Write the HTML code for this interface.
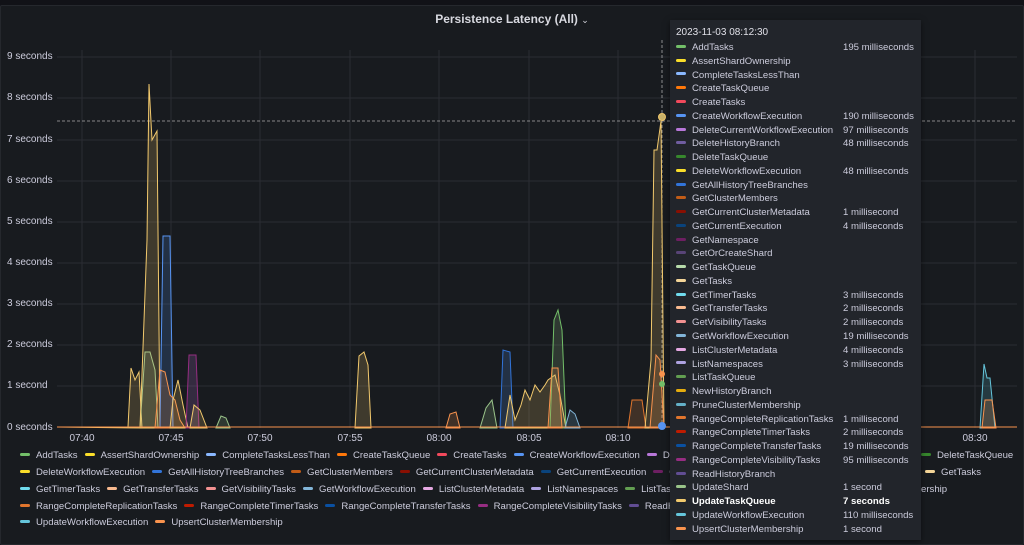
<!DOCTYPE html>
<html><head><meta charset="utf-8"><style>
*{margin:0;padding:0;box-sizing:border-box}
body{width:1024px;height:537px;background:#111217;font-family:"Liberation Sans",sans-serif;color:#ccccdc;overflow:hidden;position:relative}
.panel{position:absolute;left:0;top:5px;width:1024px;height:540px;background:#181b1f;border:1px solid #25282d;border-radius:2px}
.title{position:absolute;top:12px;left:0;width:1024px;text-align:center;font-size:12px;font-weight:bold;color:#d8d9e0}
.yl{position:absolute;left:7px;font-size:10px;color:#ccccdc}
.xl{position:absolute;top:433px;font-size:10px;color:#ccccdc;transform:translateX(-50%)}
.leg{position:absolute;left:20px;font-size:9.6px;white-space:nowrap;color:#ccccdc}
.leg span{margin-right:7px}
.leg i,.tt i{display:inline-block;width:10px;height:3px;border-radius:2px;vertical-align:middle;margin-right:6px;position:relative;top:-1px}
.tt{position:absolute;left:670px;top:20px;width:251px;height:520px;background:#22252b;font-size:9.6px;color:#ccccdc;box-shadow:0 2px 6px rgba(0,0,0,.5)}
.tt .d{position:absolute;left:6px;top:7px;font-size:10px;color:#e0e0e8}
.row{position:absolute;left:6px;height:13px;white-space:nowrap;width:245px}
.row .v{position:absolute;left:167px}
.b{font-weight:bold;color:#fff}
</style></head><body>
<div class="panel"></div>
<div class="title">Persistence Latency (All) <span style="font-weight:normal;font-size:9px">&#8964;</span></div>
<svg style="position:absolute;left:0;top:0" width="1024" height="537">
<g stroke="#2a2d33" stroke-width="1">
<line x1="57" y1="57" x2="1017" y2="57"/><line x1="57" y1="98" x2="1017" y2="98"/><line x1="57" y1="140" x2="1017" y2="140"/><line x1="57" y1="181" x2="1017" y2="181"/><line x1="57" y1="222" x2="1017" y2="222"/><line x1="57" y1="263" x2="1017" y2="263"/><line x1="57" y1="304" x2="1017" y2="304"/><line x1="57" y1="345" x2="1017" y2="345"/><line x1="57" y1="386" x2="1017" y2="386"/>
<line x1="82" y1="50" x2="82" y2="428"/><line x1="171" y1="50" x2="171" y2="428"/><line x1="260" y1="50" x2="260" y2="428"/><line x1="350" y1="50" x2="350" y2="428"/><line x1="439" y1="50" x2="439" y2="428"/><line x1="529" y1="50" x2="529" y2="428"/><line x1="618" y1="50" x2="618" y2="428"/><line x1="975" y1="50" x2="975" y2="428"/>
</g>
<line x1="57" y1="121" x2="1017" y2="121" stroke="#aaa" stroke-dasharray="3,2" stroke-width="0.8"/>
<line x1="662" y1="40" x2="662" y2="428" stroke="#aaa" stroke-dasharray="3,2" stroke-width="0.8"/>
<g stroke-width="1" fill-opacity="0.18">
<polygon points="57,427 128,427 131,368 135,380 139,372 142,428" fill="#f2c96d" stroke="#f2c96d"/>
<polygon points="140,428 145,352 150,352 155,370 158,428" fill="#9ac48a" stroke="#9ac48a"/>
<polygon points="140,428 147,240 149,84 152,140 157,131 160,428" fill="#f2c96d" stroke="#f2c96d"/>
<polygon points="160,428 163,236 170,236 173,428" fill="#5794f2" stroke="#5794f2"/>
<polygon points="155,428 160,370 165,372 170,395 175,400 180,420 185,428" fill="#f9934e" stroke="#f9934e"/>
<polygon points="170,428 173,400 178,380 183,405 188,428" fill="#f2c96d" stroke="#f2c96d"/>
<polygon points="186,428 189,355 196,355 199,428" fill="#b877d9" stroke="#962d82"/>
<polygon points="190,428 194,405 200,410 207,428" fill="#f2c96d" stroke="#f2c96d"/>
<polygon points="216,428 221,416 226,418 230,428" fill="#9ac48a" stroke="#9ac48a"/>
<polygon points="355,428 359,356 364,352 368,365 371,428" fill="#f2c96d" stroke="#f2c96d"/>
<polygon points="446,428 450,414 456,412 460,428" fill="#f9934e" stroke="#f9934e"/>
<polygon points="480,428 486,408 492,400 497,428" fill="#9ac48a" stroke="#9ac48a"/>
<polygon points="500,428 503,350 510,352 513,428" fill="#5794f2" stroke="#3274d9"/>
<polygon points="505,428 510,395 515,420 521,405 525,390 530,400 535,385 540,392 545,385 548,380 555,375 560,395 566,428" fill="#f2c96d" stroke="#f2c96d"/>
<polygon points="550,428 554,320 558,310 562,330 566,428" fill="#9ac48a" stroke="#73bf69"/>
<polygon points="548,428 552,368 558,368 562,428" fill="#f9934e" stroke="#f9934e"/>
<polygon points="565,428 570,410 575,414 580,428" fill="#82b5d8" stroke="#82b5d8"/>
<polygon points="628,428 632,400 642,400 646,428" fill="#f9934e" stroke="#e0752d"/>
<polygon points="645,428 651,360 654,150 657,150 661,121 664,428" fill="#f2c96d" stroke="#f2c96d"/>
<polygon points="650,428 656,355 660,360 664,428" fill="#f9934e" stroke="#f9934e"/>
<polygon points="980,428 984,364 987,378 990,378 995,428" fill="#65c5db" stroke="#65c5db"/>
<polygon points="982,428 985,400 992,400 996,428" fill="#f9934e" stroke="#f9934e"/>
<polyline points="57,427 1017,427" stroke="#f9934e" fill="none"/>
</g>
<circle cx="662" cy="117" r="3.5" fill="#c9b26a" stroke="#f2c96d"/>
<circle cx="662" cy="374" r="3" fill="#f9934e"/>
<circle cx="662" cy="384" r="3" fill="#73bf69"/>
<circle cx="662" cy="426" r="4" fill="#5794f2"/>
</svg>
<div class="yl" style="top:51px">9 seconds</div><div class="yl" style="top:92px">8 seconds</div><div class="yl" style="top:134px">7 seconds</div><div class="yl" style="top:175px">6 seconds</div><div class="yl" style="top:216px">5 seconds</div><div class="yl" style="top:257px">4 seconds</div><div class="yl" style="top:298px">3 seconds</div><div class="yl" style="top:339px">2 seconds</div><div class="yl" style="top:380px">1 second</div><div class="yl" style="top:422px">0 seconds</div>
<div class="xl" style="left:82px">07:40</div><div class="xl" style="left:171px">07:45</div><div class="xl" style="left:260px">07:50</div><div class="xl" style="left:350px">07:55</div><div class="xl" style="left:439px">08:00</div><div class="xl" style="left:529px">08:05</div><div class="xl" style="left:618px">08:10</div><div class="xl" style="left:975px">08:30</div>

<div class="leg" style="top:450px"><span><i style="background:#73bf69"></i>AddTasks</span><span><i style="background:#fade2a"></i>AssertShardOwnership</span><span><i style="background:#8ab8ff"></i>CompleteTasksLessThan</span><span><i style="background:#ff780a"></i>CreateTaskQueue</span><span><i style="background:#f2495c"></i>CreateTasks</span><span><i style="background:#5794f2"></i>CreateWorkflowExecution</span><span><i style="background:#b877d9"></i>DeleteCurrentWorkflowExecution</span><span><i style="background:#705da0"></i>DeleteHistoryBranch</span></div>
<div class="leg" style="top:450px;left:921px"><span><i style="background:#37872d"></i>DeleteTaskQueue</span></div>
<div class="leg" style="top:467px"><span><i style="background:#fade2a"></i>DeleteWorkflowExecution</span><span><i style="background:#3274d9"></i>GetAllHistoryTreeBranches</span><span><i style="background:#c15c17"></i>GetClusterMembers</span><span><i style="background:#890f02"></i>GetCurrentClusterMetadata</span><span><i style="background:#0a437c"></i>GetCurrentExecution</span><span><i style="background:#6d1f62"></i>GetNamespace</span></div>
<div class="leg" style="top:467px;left:925px"><span><i style="background:#f4d598"></i>GetTasks</span></div>
<div class="leg" style="top:484px"><span><i style="background:#70dbed"></i>GetTimerTasks</span><span><i style="background:#f9ba8f"></i>GetTransferTasks</span><span><i style="background:#f29191"></i>GetVisibilityTasks</span><span><i style="background:#82b5d8"></i>GetWorkflowExecution</span><span><i style="background:#e5a8e2"></i>ListClusterMetadata</span><span><i style="background:#aea2e0"></i>ListNamespaces</span><span><i style="background:#629e51"></i>ListTaskQueue</span></div>
<div class="leg" style="top:484px;left:921px">ership</div>
<div class="leg" style="top:501px"><span><i style="background:#e0752d"></i>RangeCompleteReplicationTasks</span><span><i style="background:#bf1b00"></i>RangeCompleteTimerTasks</span><span><i style="background:#0a50a1"></i>RangeCompleteTransferTasks</span><span><i style="background:#962d82"></i>RangeCompleteVisibilityTasks</span><span><i style="background:#614d93"></i>ReadHistoryBranch</span></div>
<div class="leg" style="top:517px"><span><i style="background:#65c5db"></i>UpdateWorkflowExecution</span><span><i style="background:#f9934e"></i>UpsertClusterMembership</span></div>

<div class="tt">
<div class="d">2023-11-03 08:12:30</div>
<div class="row" style="top:22px"><i style="background:#73bf69"></i>AddTasks<span class="v">195 milliseconds</span></div>
<div class="row" style="top:35.8px"><i style="background:#fade2a"></i>AssertShardOwnership</div>
<div class="row" style="top:49.5px"><i style="background:#8ab8ff"></i>CompleteTasksLessThan</div>
<div class="row" style="top:63.3px"><i style="background:#ff780a"></i>CreateTaskQueue</div>
<div class="row" style="top:77px"><i style="background:#f2495c"></i>CreateTasks</div>
<div class="row" style="top:90.8px"><i style="background:#5794f2"></i>CreateWorkflowExecution<span class="v">190 milliseconds</span></div>
<div class="row" style="top:104.6px"><i style="background:#b877d9"></i>DeleteCurrentWorkflowExecution<span class="v">97 milliseconds</span></div>
<div class="row" style="top:118.3px"><i style="background:#705da0"></i>DeleteHistoryBranch<span class="v">48 milliseconds</span></div>
<div class="row" style="top:132.1px"><i style="background:#37872d"></i>DeleteTaskQueue</div>
<div class="row" style="top:145.8px"><i style="background:#fade2a"></i>DeleteWorkflowExecution<span class="v">48 milliseconds</span></div>
<div class="row" style="top:159.6px"><i style="background:#3274d9"></i>GetAllHistoryTreeBranches</div>
<div class="row" style="top:173.4px"><i style="background:#c15c17"></i>GetClusterMembers</div>
<div class="row" style="top:187.1px"><i style="background:#890f02"></i>GetCurrentClusterMetadata<span class="v">1 millisecond</span></div>
<div class="row" style="top:200.9px"><i style="background:#0a437c"></i>GetCurrentExecution<span class="v">4 milliseconds</span></div>
<div class="row" style="top:214.6px"><i style="background:#6d1f62"></i>GetNamespace</div>
<div class="row" style="top:228.4px"><i style="background:#584477"></i>GetOrCreateShard</div>
<div class="row" style="top:242.2px"><i style="background:#b7dbab"></i>GetTaskQueue</div>
<div class="row" style="top:255.9px"><i style="background:#f4d598"></i>GetTasks</div>
<div class="row" style="top:269.7px"><i style="background:#70dbed"></i>GetTimerTasks<span class="v">3 milliseconds</span></div>
<div class="row" style="top:283.4px"><i style="background:#f9ba8f"></i>GetTransferTasks<span class="v">2 milliseconds</span></div>
<div class="row" style="top:297.2px"><i style="background:#f29191"></i>GetVisibilityTasks<span class="v">2 milliseconds</span></div>
<div class="row" style="top:311px"><i style="background:#82b5d8"></i>GetWorkflowExecution<span class="v">19 milliseconds</span></div>
<div class="row" style="top:324.7px"><i style="background:#e5a8e2"></i>ListClusterMetadata<span class="v">4 milliseconds</span></div>
<div class="row" style="top:338.5px"><i style="background:#aea2e0"></i>ListNamespaces<span class="v">3 milliseconds</span></div>
<div class="row" style="top:352.2px"><i style="background:#629e51"></i>ListTaskQueue</div>
<div class="row" style="top:366px"><i style="background:#e5ac0e"></i>NewHistoryBranch</div>
<div class="row" style="top:379.8px"><i style="background:#64b0c8"></i>PruneClusterMembership</div>
<div class="row" style="top:393.5px"><i style="background:#e0752d"></i>RangeCompleteReplicationTasks<span class="v">1 millisecond</span></div>
<div class="row" style="top:407.3px"><i style="background:#bf1b00"></i>RangeCompleteTimerTasks<span class="v">2 milliseconds</span></div>
<div class="row" style="top:421px"><i style="background:#0a50a1"></i>RangeCompleteTransferTasks<span class="v">19 milliseconds</span></div>
<div class="row" style="top:434.8px"><i style="background:#962d82"></i>RangeCompleteVisibilityTasks<span class="v">95 milliseconds</span></div>
<div class="row" style="top:448.6px"><i style="background:#614d93"></i>ReadHistoryBranch</div>
<div class="row" style="top:462.3px"><i style="background:#9ac48a"></i>UpdateShard<span class="v">1 second</span></div>
<div class="row b" style="top:476.1px"><i style="background:#f2c96d"></i>UpdateTaskQueue<span class="v">7 seconds</span></div>
<div class="row" style="top:489.8px"><i style="background:#65c5db"></i>UpdateWorkflowExecution<span class="v">110 milliseconds</span></div>
<div class="row" style="top:503.6px"><i style="background:#f9934e"></i>UpsertClusterMembership<span class="v">1 second</span></div>
</div>
</body></html>
